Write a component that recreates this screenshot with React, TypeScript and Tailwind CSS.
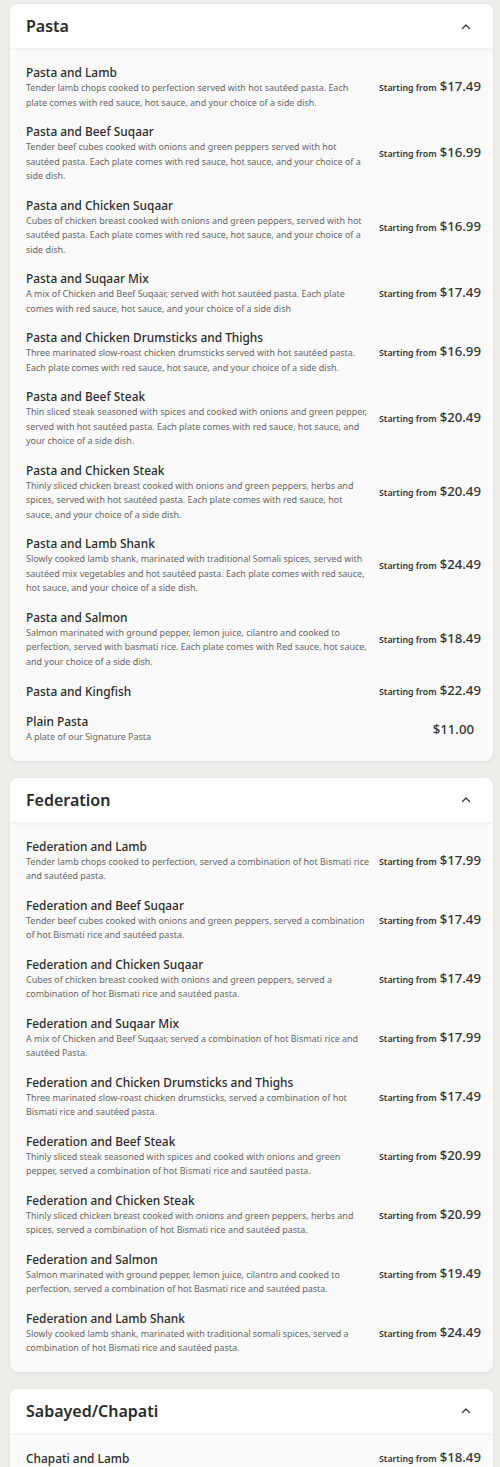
type Item = { name: string; desc?: string; price: string; from?: boolean };

const pasta: Item[] = [
  { name: "Pasta and Lamb", desc: "Tender lamb chops cooked to perfection served with hot sautéed pasta. Each plate comes with red sauce, hot sauce, and your choice of a side dish.", price: "$17.49", from: true },
  { name: "Pasta and Beef Suqaar", desc: "Tender beef cubes cooked with onions and green peppers served with hot sautéed pasta. Each plate comes with red sauce, hot sauce, and your choice of a side dish.", price: "$16.99", from: true },
  { name: "Pasta and Chicken Suqaar", desc: "Cubes of chicken breast cooked with onions and green peppers, served with hot sautéed pasta. Each plate comes with red sauce, hot sauce, and your choice of a side dish.", price: "$16.99", from: true },
  { name: "Pasta and Suqaar Mix", desc: "A mix of Chicken and Beef Suqaar, served with hot sautéed pasta. Each plate comes with red sauce, hot sauce, and your choice of a side dish", price: "$17.49", from: true },
  { name: "Pasta and Chicken Drumsticks and Thighs", desc: "Three marinated slow-roast chicken drumsticks served with hot sautéed pasta. Each plate comes with red sauce, hot sauce, and your choice of a side dish.", price: "$16.99", from: true },
  { name: "Pasta and Beef Steak", desc: "Thin sliced steak seasoned with spices and cooked with onions and green pepper, served with hot sautéed pasta. Each plate comes with red sauce, hot sauce, and your choice of a side dish.", price: "$20.49", from: true },
  { name: "Pasta and Chicken Steak", desc: "Thinly sliced chicken breast cooked with onions and green peppers, herbs and spices, served with hot sautéed pasta. Each plate comes with red sauce, hot sauce, and your choice of a side dish.", price: "$20.49", from: true },
  { name: "Pasta and Lamb Shank", desc: "Slowly cooked lamb shank, marinated with traditional Somali spices, served with sautéed mix vegetables and hot sautéed pasta. Each plate comes with red sauce, hot sauce, and your choice of a side dish.", price: "$24.49", from: true },
  { name: "Pasta and Salmon", desc: "Salmon marinated with ground pepper, lemon juice, cilantro and cooked to perfection, served with basmati rice. Each plate comes with Red sauce, hot sauce, and your choice of a side dish.", price: "$18.49", from: true },
  { name: "Pasta and Kingfish", price: "$22.49", from: true },
  { name: "Plain Pasta", desc: "A plate of our Signature Pasta", price: "$11.00" },
];

const federation: Item[] = [
  { name: "Federation and Lamb", desc: "Tender lamb chops cooked to perfection, served a combination of hot Bismati rice and sautéed pasta.", price: "$17.99", from: true },
  { name: "Federation and Beef Suqaar", desc: "Tender beef cubes cooked with onions and green peppers, served a combination of hot Bismati rice and sautéed pasta.", price: "$17.49", from: true },
  { name: "Federation and Chicken Suqaar", desc: "Cubes of chicken breast cooked with onions and green peppers, served a combination of hot Bismati rice and sautéed pasta.", price: "$17.49", from: true },
  { name: "Federation and Suqaar Mix", desc: "A mix of Chicken and Beef Suqaar, served a combination of hot Bismati rice and sautéed Pasta.", price: "$17.99", from: true },
  { name: "Federation and Chicken Drumsticks and Thighs", desc: "Three marinated slow-roast chicken drumsticks, served a combination of hot Bismati rice and sautéed pasta.", price: "$17.49", from: true },
  { name: "Federation and Beef Steak", desc: "Thinly sliced steak seasoned with spices and cooked with onions and green pepper, served a combination of hot Bismati rice and sautéed pasta.", price: "$20.99", from: true },
  { name: "Federation and Chicken Steak", desc: "Thinly sliced chicken breast cooked with onions and green peppers, herbs and spices, served a combination of hot Bismati rice and sautéed pasta.", price: "$20.99", from: true },
  { name: "Federation and Salmon", desc: "Salmon marinated with ground pepper, lemon juice, cilantro and cooked to perfection, served a combination of hot Basmati rice and sautéed pasta.", price: "$19.49", from: true },
  { name: "Federation and Lamb Shank", desc: "Slowly cooked lamb shank, marinated with traditional somali spices, served a combination of hot Bismati rice and sautéed pasta.", price: "$24.49", from: true },
];

const chapati: Item[] = [{ name: "Chapati and Lamb", price: "$18.49", from: true }];

function Chevron() {
  return (
    <svg width="10" height="7" viewBox="0 0 10 7" fill="none" className="text-[#333]">
      <path d="M1.5 5.5 5 2l3.5 3.5" stroke="currentColor" strokeWidth="1.3" strokeLinecap="round" strokeLinejoin="round" />
    </svg>
  );
}

function MenuRow({ item }: { item: Item }) {
  return (
    <div className="flex items-center justify-between gap-2">
      <div className="w-[345px] shrink-0">
        <div className="text-[11.9px] font-medium leading-4 text-[#2b2b2b]">{item.name}</div>
        {item.desc && <div className="mt-[1px] text-[8.95px] leading-[14.5px] text-[#666]">{item.desc}</div>}
      </div>
      <div className="mr-[3px] flex items-baseline whitespace-nowrap leading-4 text-[#333]">
        {item.from && <span className="mr-[3px] text-[8.8px] font-semibold">Starting from</span>}
        <span className="text-[13.2px] font-medium">{item.price}</span>
      </div>
    </div>
  );
}

function Section({ title, items }: { title: string; items: Item[] }) {
  return (
    <section className="overflow-hidden rounded-lg bg-[#fafafa] shadow-[0_1px_3px_rgba(0,0,0,0.08)]">
      <header className="flex h-[44px] items-center justify-between bg-white px-4 shadow-[0_1px_3px_rgba(0,0,0,0.06)]">
        <h2 className="text-[16px] font-semibold text-[#2b2b2b]">{title}</h2>
        <span className="mr-[6px]"><Chevron /></span>
      </header>
      <div className="flex flex-col gap-[13px] px-4 pb-4 pt-4">
        {items.map((it) => (
          <MenuRow key={it.name} item={it} />
        ))}
      </div>
    </section>
  );
}

export default function App() {
  return (
    <div className="h-[1467px] overflow-hidden bg-[#eeede9] pl-[10px] pr-[7px] pt-1" style={{ fontFamily: '"Noto Sans", "Open Sans", sans-serif' }}>
      <div className="flex flex-col gap-[17px]">
        <Section title="Pasta" items={pasta} />
        <Section title="Federation" items={federation} />
        <Section title="Sabayed/Chapati" items={chapati} />
      </div>
    </div>
  );
}
